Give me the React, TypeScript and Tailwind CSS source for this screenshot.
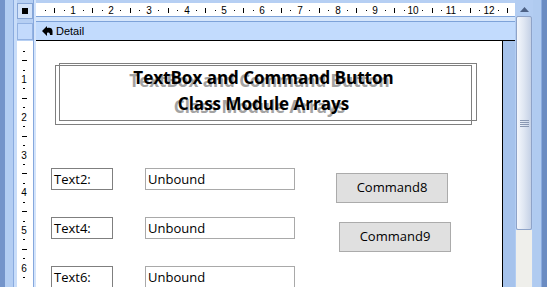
import React from "react";

const UNIT = 37.75;

function HRuler() {
  const marks: React.ReactNode[] = [];
  for (let q = 1; q < 52; q++) {
    const x = Math.round(UNIT * (q / 4) - 0.5);
    if (x > 476) break;
    if (q % 4 === 0) {
      marks.push(
        <text key={q} x={x} y={11} textAnchor="middle" fontSize={10} fill="#000">
          {q / 4}
        </text>
      );
    } else if (q % 2 === 0) {
      marks.push(<rect key={q} x={x} y={5} width={1} height={5} fill="#000" />);
    } else {
      marks.push(<rect key={q} x={x} y={7} width={1} height={1} fill="#000" />);
    }
  }
  return (
    <svg width={479} height={13} className="block">
      {marks}
    </svg>
  );
}

function VRuler() {
  const marks: React.ReactNode[] = [];
  for (let q = 1; q < 27; q++) {
    const y = Math.round(UNIT * (q / 4) + 0.3);
    if (q % 4 === 0) {
      marks.push(
        <text key={q} x={7} y={y + 4} textAnchor="middle" fontSize={10} fill="#000">
          {q / 4}
        </text>
      );
    } else if (q % 2 === 0) {
      marks.push(<rect key={q} x={5} y={y} width={5} height={1} fill="#000" />);
    } else {
      marks.push(<rect key={q} x={6} y={y} width={2} height={1} fill="#000" />);
    }
  }
  return (
    <svg width={16} height={246} className="block">
      {marks}
    </svg>
  );
}

function FieldRow({
  label,
  button,
  buttonGap,
}: {
  label: string;
  button?: string;
  buttonGap?: string;
}) {
  return (
    <div className="flex h-[49px] shrink-0 items-start">
      <div className="ml-[15px] h-[22px] w-[62px] shrink-0 border border-[#7f7f7f] pl-[2px] pt-[1px] leading-[18px]">
        {label}
      </div>
      <div className="ml-[32px] h-[22px] w-[150px] shrink-0 border border-[#a9a9a9] pl-[2px] pt-[1px] leading-[18px]">
        Unbound
      </div>
      {button && (
        <div
          className={`${buttonGap} mt-[5px] flex h-[30px] w-[112px] shrink-0 items-center justify-center border border-[#ababab] bg-[#e0e0e0]`}
        >
          {button}
        </div>
      )}
    </div>
  );
}

export default function App() {
  return (
    <div className="flex h-[287px] w-[547px] overflow-hidden bg-[#b6cff3] font-['Liberation_Sans',Arial,sans-serif]">
      {/* left frame */}
      <div className="w-[5px] shrink-0 bg-[#7494ca]" />
      <div className="w-[8px] shrink-0 bg-[#b3cdf2]" />
      <div className="w-[1px] shrink-0 bg-[#8aabdf]" />
      <div className="w-[3px] shrink-0 bg-[#c9ddf9]" />

      {/* vertical ruler column */}
      <div className="flex w-[16px] shrink-0 flex-col pt-[3px]">
        <div className="flex h-[16px] shrink-0 items-center justify-center border border-[#86a5d6] bg-[#d3e3fa]">
          <div className="h-[6px] w-[6px] bg-black" />
        </div>
        <div className="mt-[4px] h-[17px] shrink-0 border border-[#93b2e2] bg-[#c3dafc]" />
        <div className="mt-[1px] flex-1 overflow-hidden bg-white">
          <VRuler />
        </div>
      </div>
      <div className="w-[1px] shrink-0 bg-[#86a8dd]" />
      <div className="w-[2px] shrink-0 bg-[#d4e4fb]" />

      {/* design surface */}
      <div className="flex w-[479px] shrink-0 flex-col pt-[3px]">
        <div className="h-[13px] shrink-0 bg-white">
          <HRuler />
        </div>
        <div className="h-[1px] shrink-0 bg-[#7ea3d9]" />
        <div className="h-[4px] shrink-0 bg-[#d6e6fb]" />
        <div className="h-[1px] shrink-0 bg-[#7ea3d9]" />
        <div className="flex h-[18px] shrink-0 items-center gap-[3px] bg-[#c2dbfd] pl-[6px] text-[11px] text-black">
          <svg width={11} height={10} viewBox="0 0 11 10" className="block">
            <path d="M0 5 L5 0 L5 2 C8 1 10.5 2 10.5 5 L10.5 9 L8 9 C8 7 7 6 5 7 L5 10 Z" fill="#000" />
          </svg>
          <span>Detail</span>
        </div>
        <div className="h-[1px] shrink-0 bg-black" />
        <div className="flex min-h-0 flex-1">
          <div className="flex w-[466px] shrink-0 flex-col overflow-hidden bg-white font-['Open_Sans',sans-serif] text-[13px] text-black">
            {/* title */}
            <div className="relative ml-[19px] mt-[24px] h-[60px] w-[417px] shrink-0 border border-[#7f7f7f]">
              <div className="absolute left-[3px] top-[-3px] h-[58px] w-[418px] border border-[#7f7f7f]" />
              <div className="relative -mt-[1px] text-center text-[17px] font-bold leading-[26px] [text-shadow:-4px_3px_0_#a3a3a3]">
                <div>TextBox and Command Button</div>
                <div>Class Module Arrays</div>
              </div>
            </div>
            <div className="mt-[43px] flex shrink-0 flex-col">
              <FieldRow label="Text2:" button="Command8" buttonGap="ml-[41px]" />
              <FieldRow label="Text4:" button="Command9" buttonGap="ml-[44px]" />
              <FieldRow label="Text6:" />
            </div>
          </div>
          <div className="w-[1px] shrink-0 bg-black" />
          <div className="w-[12px] shrink-0 bg-[#a6c3ec]" />
        </div>
      </div>

      {/* scrollbar */}
      <div className="flex w-[18px] shrink-0 flex-col bg-[#b3cdf2] px-[1px] pt-[3px]">
        <div className="flex h-[13px] shrink-0 items-center justify-center">
          <svg width={9} height={5} className="block">
            <path d="M0 5 L4.5 0 L9 5 Z" fill="#4d6185" />
          </svg>
        </div>
        <div className="flex h-[214px] shrink-0 flex-col items-center justify-center gap-[1px] rounded-[2px] border border-[#8ea3c8] bg-[linear-gradient(90deg,#f4f7fc,#dfe6f2_50%,#c5d1e6)]">
          <div className="h-[1px] w-[9px] bg-[#8a98b2]" />
          <div className="h-[1px] w-[9px] bg-[#8a98b2]" />
          <div className="h-[1px] w-[9px] bg-[#8a98b2]" />
          <div className="h-[1px] w-[9px] bg-[#8a98b2]" />
        </div>
        <div className="flex-1 bg-[#efefeb]" />
      </div>
      <div className="w-[8px] shrink-0 bg-[#b0cbf0]" />
      <div className="w-[1px] shrink-0 bg-[#8aabdf]" />
      <div className="w-[5px] shrink-0 bg-[#6b8cc2]" />
    </div>
  );
}
